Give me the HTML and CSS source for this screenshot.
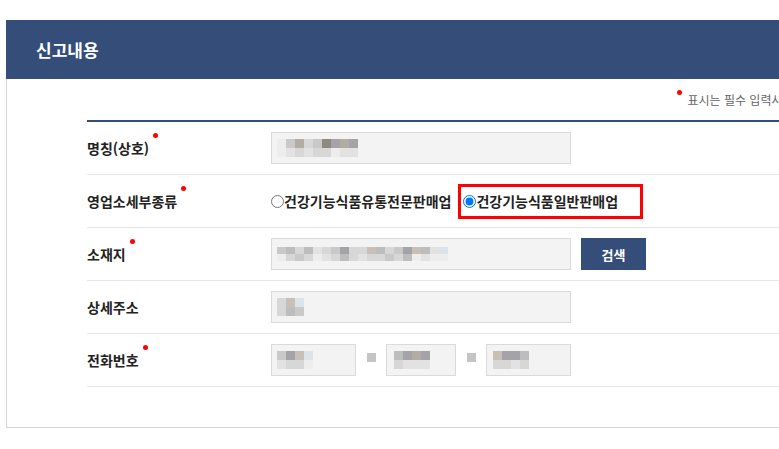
FILE: index.html
```html
<!DOCTYPE html>
<html lang="ko">
<head>
<meta charset="utf-8">
<title>신고내용</title>
<link rel="stylesheet" href="styles.css">
</head>
<body>
<div class="page">
  <section class="panel">
    <h2 class="panel-title">신고내용</h2>
    <div class="panel-body">
      <p class="note"><span class="dot"></span>표시는 필수 입력사항입니다.</p>
      <div class="form">
        <div class="row">
          <div class="label"><span class="req">명칭(상호)</span></div>
          <div class="field">
            <div class="input w300">
              <span class="mosaic cols9">
                <i class="a"></i><i class="d"></i><i class="f"></i><i class="c"></i><i class="d"></i><i class="h"></i><i class="g"></i><i class="f"></i><i class="g"></i>
                <i class="a"></i><i class="b"></i><i class="c"></i><i class="b"></i><i class="c"></i><i class="c"></i><i class="a"></i><i class="b"></i><i class="b"></i>
              </span>
            </div>
          </div>
        </div>
        <div class="row">
          <div class="label"><span class="req">영업소세부종류</span></div>
          <div class="field radios">
            <label class="opt"><input type="radio" name="kind">건강기능식품유통전문판매업</label>
            <span class="highlight"><label class="opt"><input type="radio" name="kind" checked>건강기능식품일반판매업</label></span>
          </div>
        </div>
        <div class="row">
          <div class="label"><span class="req">소재지</span></div>
          <div class="field">
            <div class="input w300">
              <span class="mosaic cols19 short">
                <i class="d"></i><i class="e"></i><i class="c"></i><i class="e"></i><i class="b"></i><i class="c"></i><i class="d"></i><i class="g"></i><i class="c"></i><i class="c"></i><i class="j"></i><i class="e"></i><i class="c"></i><i class="d"></i><i class="g"></i><i class="j"></i><i class="e"></i><i class="b"></i><i class="i"></i>
                <i class="a"></i><i class="c"></i><i class="d"></i><i class="c"></i><i class="a"></i><i class="b"></i><i class="c"></i><i class="e"></i><i class="c"></i><i class="b"></i><i class="c"></i><i class="c"></i><i class="d"></i><i class="c"></i><i class="e"></i><i class="a"></i><i class="b"></i><i class="a"></i><i class="a"></i>
              </span>
            </div>
            <button class="btn" type="button">검색</button>
          </div>
        </div>
        <div class="row">
          <div class="label"><span>상세주소</span></div>
          <div class="field">
            <div class="input w300">
              <span class="mosaic cols3">
                <i class="c"></i><i class="j"></i><i class="i"></i>
                <i class="c"></i><i class="e"></i><i class="d"></i>
              </span>
            </div>
          </div>
        </div>
        <div class="row">
          <div class="label"><span class="req">전화번호</span></div>
          <div class="field">
            <div class="input w85">
              <span class="mosaic cols4">
                <i class="d"></i><i class="g"></i><i class="j"></i><i class="i"></i>
                <i class="b"></i><i class="c"></i><i class="c"></i><i class="a"></i>
              </span>
            </div>
            <span class="dash"><i></i></span>
            <div class="input w70">
              <span class="mosaic cols4">
                <i class="e"></i><i class="g"></i><i class="f"></i><i class="g"></i>
                <i class="c"></i><i class="b"></i><i class="b"></i><i class="b"></i>
              </span>
            </div>
            <span class="dash"><i></i></span>
            <div class="input w85b">
              <span class="mosaic cols4">
                <i class="j"></i><i class="g"></i><i class="g"></i><i class="e"></i>
                <i class="c"></i><i class="c"></i><i class="b"></i><i class="c"></i>
              </span>
            </div>
          </div>
        </div>
      </div>
    </div>
  </section>
</div>
</body>
</html>
```
FILE: styles.css
```css
html, body {
  margin: 0;
  padding: 0;
  overflow: hidden;
  background: #fff;
}

body {
  font-family: "Noto Sans CJK KR", "Noto Sans", sans-serif;
  color: #222;
}

.page {
  padding: 20px 0 0 6px;
}

.panel {
  width: 905px;
}

.panel-title {
  margin: 0;
  height: 59px;
  box-sizing: border-box;
  padding-left: 30px;
  display: flex;
  align-items: center;
  background: #344d79;
  color: #fff;
  font-size: 17px;
  font-weight: 700;
}

.panel-body {
  border: 1px solid #d6d6d6;
  border-top: none;
  padding: 0 80px 40px;
}

.note {
  margin: 0;
  height: 41px;
  display: flex;
  align-items: center;
  justify-content: flex-end;
  font-size: 12px;
  color: #666;
}

.dot {
  width: 5px;
  height: 5px;
  border-radius: 50%;
  background: #f00;
  margin-right: 5px;
  transform: translateY(-7px);
}

.form {
  border-top: 2px solid #344d79;
}

.row {
  display: grid;
  grid-template-columns: 184px 1fr;
  align-items: center;
  height: 52px;
  border-bottom: 1px solid #e6e6e6;
}

.label {
  font-size: 14px;
  font-weight: 700;
  color: #222;
}

.req::after {
  content: "";
  display: inline-block;
  width: 5px;
  height: 5px;
  border-radius: 50%;
  background: #f00;
  margin-left: 4px;
  vertical-align: middle;
  transform: translateY(-15px);
}

.field {
  display: flex;
  align-items: center;
}

.input {
  box-sizing: border-box;
  height: 32px;
  background: #f3f3f3;
  border: 1px solid #dadada;
  display: flex;
  align-items: center;
  padding: 0 5px;
}

.w300 { width: 300px; }
.w85 { width: 85px; }
.w70 { width: 70px; padding-left: 7px; }
.w85b { width: 85px; padding-left: 6px; }

.mosaic {
  display: grid;
  grid-auto-rows: 9px;
}

.mosaic.short { grid-auto-rows: 7px; }
.cols3 { grid-template-columns: repeat(3, 9px); }
.cols4 { grid-template-columns: repeat(4, 9px); }
.cols9 { grid-template-columns: repeat(9, 9px); }
.cols19 { grid-template-columns: repeat(19, 9px); }

.mosaic i { display: block; }
.mosaic .a { background: #ededed; }
.mosaic .b { background: #e2e2e2; }
.mosaic .c { background: #d7d7d7; }
.mosaic .d { background: #c9c9c9; }
.mosaic .e { background: #bdbdbd; }
.mosaic .f { background: #b1ada6; }
.mosaic .g { background: #a3a3a8; }
.mosaic .h { background: #8f8983; }
.mosaic .i { background: #dde3ea; }
.mosaic .j { background: #c8c0b8; }

.dash {
  width: 30px;
  display: flex;
  justify-content: center;
}

.dash i {
  display: block;
  width: 9px;
  height: 9px;
  background: #c4c4c4;
  margin-bottom: 5px;
}

.btn {
  margin-left: 10px;
  width: 65px;
  height: 32px;
  border: none;
  background: #344d79;
  color: #fff;
  font-family: inherit;
  font-size: 13px;
  font-weight: 700;
  padding: 0;
}

.radios {
  gap: 7px;
}

.opt {
  display: inline-flex;
  align-items: center;
  font-size: 14px;
  font-weight: 700;
  color: #222;
}

.opt input {
  margin: 0;
  width: 13px;
  height: 13px;
}

.highlight {
  display: inline-flex;
  align-items: center;
  height: 35px;
  box-sizing: border-box;
  border: 3px solid #f00;
  padding: 0 22px 0 2px;
}
```
